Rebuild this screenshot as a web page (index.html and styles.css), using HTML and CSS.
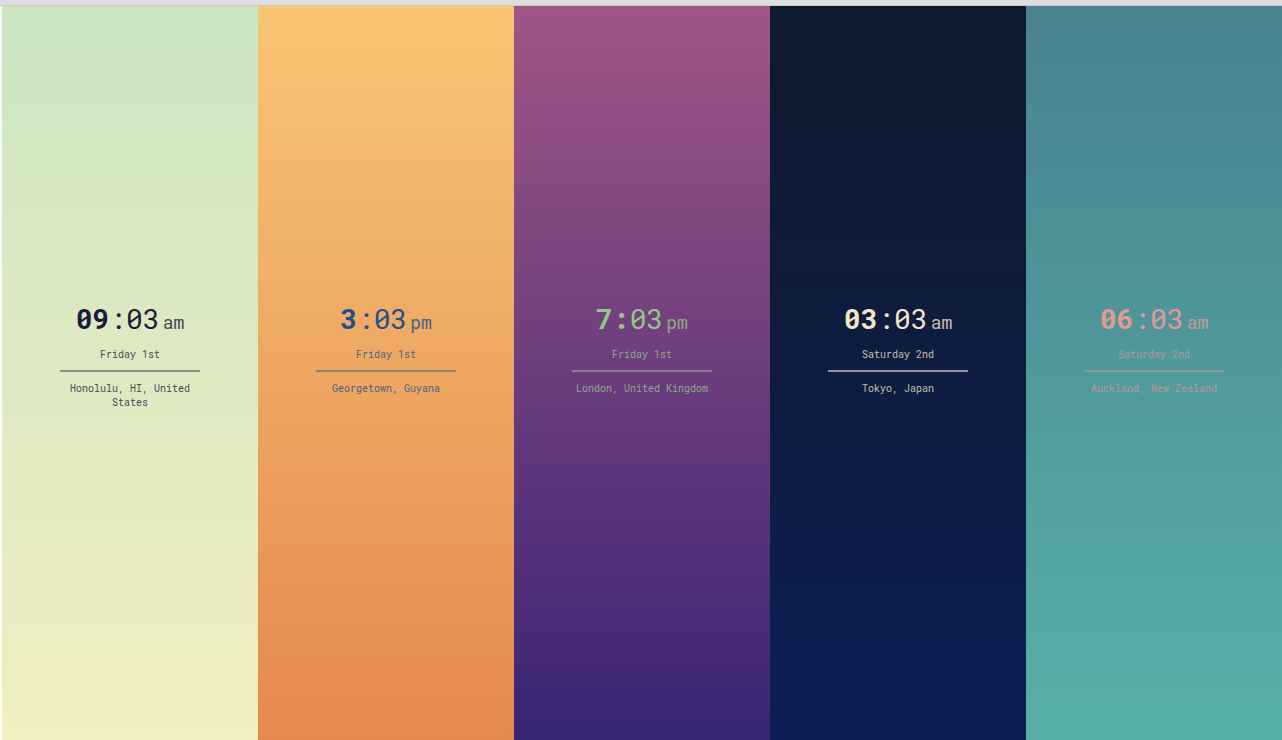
FILE: index.html
```html
<!DOCTYPE html>
<html lang="en">
<head>
<meta charset="utf-8">
<meta name="viewport" content="width=device-width, initial-scale=1">
<title>World clock</title>
<link rel="stylesheet" href="styles.css">
</head>
<body>
<div class="topbar"></div>
<main class="zones">
  <section class="zone honolulu">
    <div class="clock">
      <time class="time"><b>09</b>:03<small>am</small></time>
      <p class="date">Friday 1st</p>
      <hr class="rule">
      <p class="city">Honolulu, HI, United States</p>
    </div>
  </section>
  <section class="zone georgetown">
    <div class="clock">
      <time class="time"><b>3</b>:03<small>pm</small></time>
      <p class="date">Friday 1st</p>
      <hr class="rule">
      <p class="city">Georgetown, Guyana</p>
    </div>
  </section>
  <section class="zone london">
    <div class="clock">
      <time class="time"><b>7:</b>03<small>pm</small></time>
      <p class="date">Friday 1st</p>
      <hr class="rule">
      <p class="city">London, United Kingdom</p>
    </div>
  </section>
  <section class="zone tokyo">
    <div class="clock">
      <time class="time"><b>03</b>:03<small>am</small></time>
      <p class="date">Saturday 2nd</p>
      <hr class="rule">
      <p class="city">Tokyo, Japan</p>
    </div>
  </section>
  <section class="zone auckland">
    <div class="clock">
      <time class="time"><b>06</b>:03<small>am</small></time>
      <p class="date">Saturday 2nd</p>
      <hr class="rule">
      <p class="city">Auckland, New Zealand</p>
    </div>
  </section>
</main>
</body>
</html>
```
FILE: styles.css
```css
* { box-sizing: border-box; }

body {
  margin: 0;
  min-height: 100vh;
  display: flex;
  flex-direction: column;
  background: #fff;
  font-family: "Roboto Mono", "DejaVu Sans Mono", "Liberation Mono", monospace;
}

.topbar {
  height: 6px;
  background: #dedede;
  border-bottom: 1px solid #c9cbc8;
}

.zones {
  flex: 1;
  display: grid;
  grid-template-columns: repeat(5, 1fr);
  padding-left: 2px;
}

.zone {
  display: flex;
  align-items: center;
  justify-content: center;
  padding-bottom: 34px;
}

.clock {
  width: 140px;
  text-align: center;
}

.time {
  display: flex;
  justify-content: center;
  align-items: baseline;
  font-size: 28px;
  line-height: 32px;
}

.time small {
  margin-left: 3px;
  font-size: 18px;
  opacity: 0.8;
}

.date,
.city {
  margin: 0;
  font-size: 10px;
  line-height: 14px;
  opacity: 0.8;
}

.date { margin-top: 10px; }

.city { min-height: 28px; }

.rule {
  height: 2px;
  margin: 8px 0 10px;
  border: 0;
  background: #8c8c8c;
}

.honolulu { color: #1b1b42; background: linear-gradient(#cbe5c3, #f1eebf); }
.georgetown { color: #23508c; background: linear-gradient(#f8c574, #e48850); }
.london { color: #95c68a; background: linear-gradient(#a05685, #382475); }
.tokyo { color: #f5e6c8; background: linear-gradient(#0f1a2d, #0d1e54); }
.auckland { color: #e59a91; background: linear-gradient(#49838f, #56b0a8); }

.georgetown .rule { background: #8c8473; }
.london .rule { background: #88808c; }
.tokyo .rule { background: #9a90a0; }
.auckland .rule { background: #8f9796; }
.auckland .date,
.auckland .city { opacity: 0.65; }
```
